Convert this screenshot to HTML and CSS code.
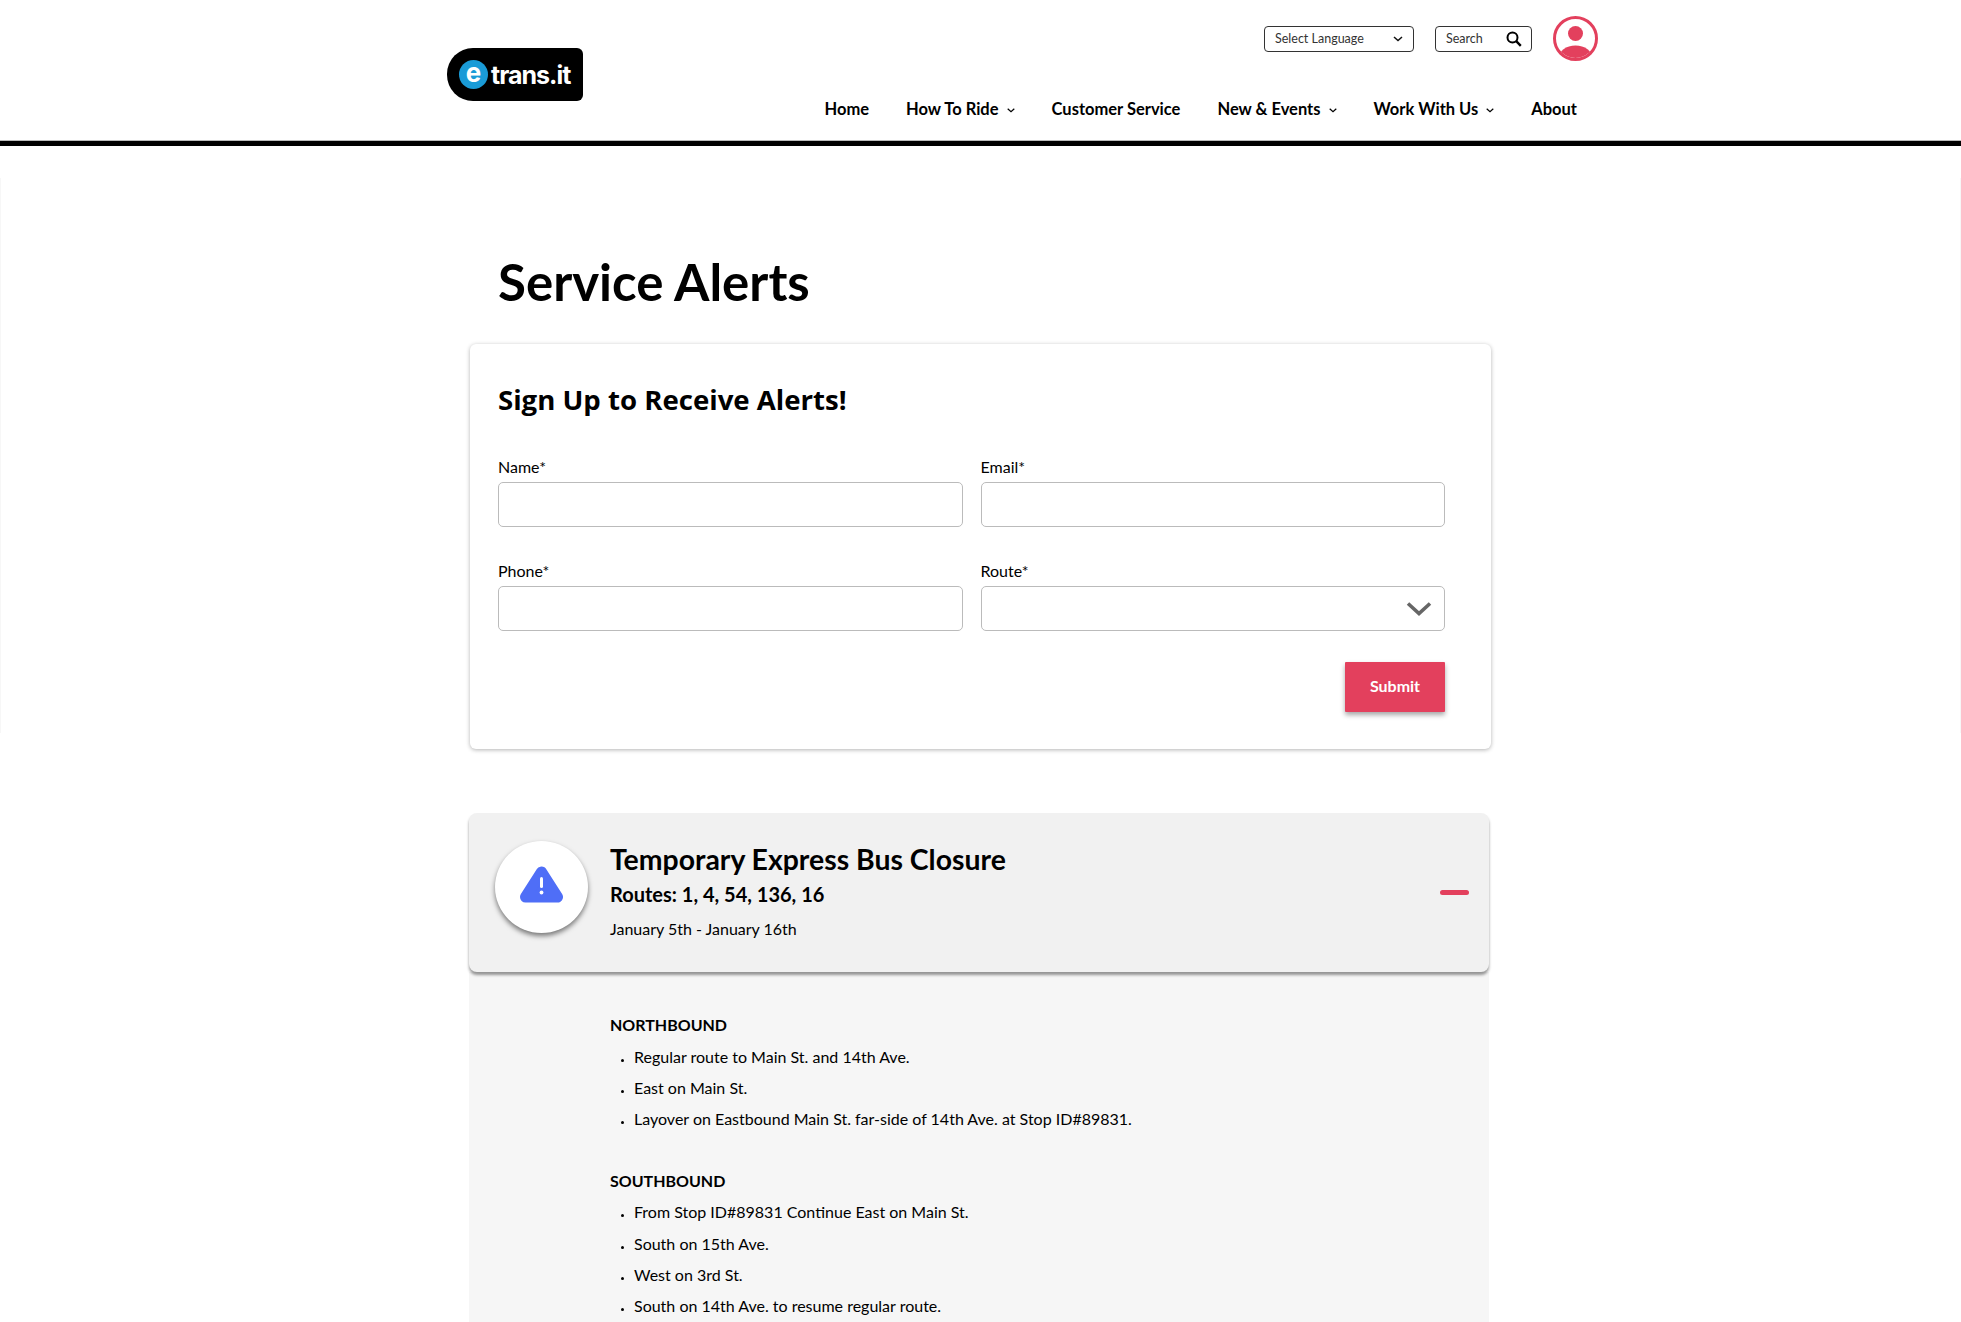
FILE: index.html
```html
<!DOCTYPE html>
<html>

<head>
    <title>Service Alerts</title>
    <link rel="stylesheet" href="styles.css">
</head>

<body>
    <!-- Faint edges of the page panel -->
    <div class="page-frame"></div>

    <!-- Header -->
    <header class="site-header">
        <div class="header-inner">
            <a class="logo" href="#"><span class="logo-e">e</span><span class="logo-text">trans.it</span></a>

            <div class="header-right">
                <div class="utility-row">
                    <div class="lang-select">
                        <span>Select Language</span>
                        <svg width="10" height="6" viewBox="0 0 10 6"><path d="M1 1l4 3.6L9 1" fill="none" stroke="#111" stroke-width="1.5"/></svg>
                    </div>
                    <div class="search-box">
                        <span>Search</span>
                        <svg width="16" height="16" viewBox="0 0 16 16"><circle cx="6.5" cy="6.5" r="5" fill="none" stroke="#000" stroke-width="2"/><path d="M10.2 10.2l4.6 4.6" stroke="#000" stroke-width="2.4"/></svg>
                    </div>
                    <svg class="avatar" width="45" height="45" viewBox="0 0 45 45">
                        <defs><clipPath id="avatar-clip"><circle cx="22.5" cy="22.5" r="19.5"/></clipPath></defs>
                        <circle cx="22.5" cy="22.5" r="21" fill="#fff" stroke="#e3405d" stroke-width="3"/>
                        <circle cx="22.5" cy="17.5" r="7.5" fill="#e3405d"/>
                        <ellipse cx="22.5" cy="42" rx="17" ry="12.5" fill="#e3405d" clip-path="url(#avatar-clip)"/>
                    </svg>
                </div>

                <nav class="main-nav">
                    <a href="#">Home</a>
                    <a href="#">How To Ride <svg width="8" height="5" viewBox="0 0 8 5"><path d="M.7.8L4 3.8 7.3.8" fill="none" stroke="#000" stroke-width="1.2"/></svg></a>
                    <a href="#">Customer Service</a>
                    <a href="#">New &amp; Events <svg width="8" height="5" viewBox="0 0 8 5"><path d="M.7.8L4 3.8 7.3.8" fill="none" stroke="#000" stroke-width="1.2"/></svg></a>
                    <a href="#">Work With Us <svg width="8" height="5" viewBox="0 0 8 5"><path d="M.7.8L4 3.8 7.3.8" fill="none" stroke="#000" stroke-width="1.2"/></svg></a>
                    <a href="#">About</a>
                </nav>
            </div>
        </div>
    </header>

    <main class="content">
        <h1 class="page-title">Service Alerts</h1>

        <!-- Sign up form -->
        <section class="signup-card">
            <h2>Sign Up to Receive Alerts!</h2>
            <form class="signup-form">
                <div class="field">
                    <label for="name">Name*</label>
                    <input type="text" id="name">
                </div>
                <div class="field">
                    <label for="email">Email*</label>
                    <input type="text" id="email">
                </div>
                <div class="field">
                    <label for="phone">Phone*</label>
                    <input type="text" id="phone">
                </div>
                <div class="field">
                    <label for="route">Route*</label>
                    <div class="select-wrap">
                        <select id="route"></select>
                        <svg class="select-arrow" width="26" height="16" viewBox="0 0 26 16"><path d="M2 2.5l11 10 11-10" fill="none" stroke="#666" stroke-width="3.6"/></svg>
                    </div>
                </div>
                <div class="form-actions">
                    <button type="button" class="submit-btn">Submit</button>
                </div>
            </form>
        </section>

        <!-- Alert -->
        <section class="alert">
            <div class="alert-head">
                <div class="alert-icon">
                    <svg width="43" height="37" viewBox="0 0 43 37">
                        <path d="M21.5 6L37.5 31H5.5Z" fill="#4f6ef7" stroke="#4f6ef7" stroke-width="11" stroke-linejoin="round"/>
                        <rect x="20" y="11" width="3" height="11" rx="1.5" fill="#fff"/>
                        <circle cx="21.5" cy="26.5" r="1.9" fill="#fff"/>
                    </svg>
                </div>
                <div class="alert-info">
                    <h3>Temporary Express Bus Closure</h3>
                    <p class="alert-routes">Routes: 1, 4, 54, 136, 16</p>
                    <p class="alert-dates">January 5th - January 16th</p>
                </div>
                <span class="collapse-bar"></span>
            </div>
            <div class="alert-body">
                <h4>NORTHBOUND</h4>
                <ul>
                    <li>Regular route to Main St. and 14th Ave.</li>
                    <li>East on Main St.</li>
                    <li>Layover on Eastbound Main St. far-side of 14th Ave. at Stop ID#89831.</li>
                </ul>
                <h4>SOUTHBOUND</h4>
                <ul>
                    <li>From Stop ID#89831 Continue East on Main St.</li>
                    <li>South on 15th Ave.</li>
                    <li>West on 3rd St.</li>
                    <li>South on 14th Ave. to resume regular route.</li>
                </ul>
            </div>
        </section>
    </main>
</body>

</html>
```

FILE: styles.css
```css
html, body {
    height: 1322px;
    overflow: hidden;
}

body {
    font-family: Lato, sans-serif;
    background-color: #fff;
    color: #000;
    margin: 0;
    padding: 0;
}

.page-frame {
    position: absolute;
    top: 178px;
    left: 0;
    right: 0;
    height: 555px;
    border-left: 1px solid #f7f7f7;
    border-right: 1px solid #f7f7f7;
}

.site-header {
    height: 141px;
    border-bottom: 5px solid #000;
    box-shadow: 0 -1px 0 #bbb inset;
}

.header-inner {
    display: flex;
    justify-content: space-between;
    width: 1151px;
    margin-left: 447px;
}

.logo {
    display: flex;
    align-items: center;
    width: 136px;
    height: 53px;
    margin-top: 48px;
    padding-left: 12px;
    box-sizing: border-box;
    background-color: #000;
    border-radius: 26px 6px 6px 26px;
    color: #fff;
    text-decoration: none;
}

.logo-e {
    width: 29px;
    height: 29px;
    border-radius: 50%;
    background-color: #1a9bd7;
    font-family: Inter, sans-serif;
    font-size: 26px;
    font-weight: 700;
    line-height: 25px;
    text-align: center;
}

.logo-text {
    margin-left: 3px;
    font-family: Inter, sans-serif;
    font-size: 25px;
    font-weight: 700;
    letter-spacing: -1px;
}

.header-right {
    display: flex;
    flex-direction: column;
    align-items: flex-end;
}

.utility-row {
    display: flex;
    align-items: center;
    gap: 21px;
    margin-top: 16px;
}

.lang-select, .search-box {
    display: flex;
    align-items: center;
    justify-content: space-between;
    height: 26px;
    box-sizing: border-box;
    padding: 0 10px;
    border: 1.5px solid #333;
    border-radius: 4px;
    font-size: 12.5px;
    color: #333;
}

.lang-select {
    width: 150px;
}

.search-box {
    width: 97px;
    padding-right: 9px;
}

.main-nav {
    display: flex;
    align-items: center;
    gap: 37px;
    margin-top: 38px;
    padding-right: 21px;
}

.main-nav a {
    color: #000;
    font-size: 16.5px;
    font-weight: 700;
    text-decoration: none;
}

.main-nav svg {
    margin-left: 4px;
    vertical-align: 2px;
}

.content {
    position: relative;
    width: 1021px;
    margin: 0 auto;
}

.page-title {
    margin: 0;
    padding: 106px 0 0 28px;
    font-size: 51px;
    font-weight: 700;
    line-height: 60px;
}

.signup-card {
    height: 405px;
    box-sizing: border-box;
    margin-top: 32px;
    padding: 36px 46px 0 28px;
    background-color: #fff;
    border-radius: 6px;
    box-shadow: 0 1px 4px rgba(0, 0, 0, 0.3);
}

.signup-card h2 {
    margin: 0;
    font-family: "Open Sans", sans-serif;
    font-size: 27.6px;
    font-weight: 700;
    line-height: 38px;
}

.signup-form {
    display: grid;
    grid-template-columns: 465px 464.5px;
    column-gap: 17.5px;
    row-gap: 33.5px;
    margin-top: 39px;
}

.field label {
    display: block;
    font-size: 16px;
    line-height: 20px;
    margin-bottom: 5px;
}

.field input, .field select {
    display: block;
    width: 100%;
    height: 45px;
    box-sizing: border-box;
    background-color: #fff;
    border: 1.5px solid #bbb;
    border-radius: 5px;
    appearance: none;
}

.select-wrap {
    position: relative;
}

.select-arrow {
    position: absolute;
    top: 15px;
    right: 13px;
}

.form-actions {
    grid-column: 1 / 3;
    display: flex;
    justify-content: flex-end;
    margin-top: -2.5px;
}

.submit-btn {
    width: 100px;
    height: 50px;
    padding-bottom: 4px;
    background-color: #e3405d;
    border: none;
    border-radius: 1px;
    box-shadow: 0 3px 5px rgba(0, 0, 0, 0.35);
    color: #fff;
    font-family: Lato, sans-serif;
    font-size: 16px;
    font-weight: 700;
}

.alert {
    width: 1020px;
    margin: 64px 0 0 -1px;
}

.alert-head {
    position: relative;
    z-index: 1;
    display: flex;
    align-items: flex-start;
    height: 159px;
    box-sizing: border-box;
    padding: 28px 0 0 26px;
    background-color: #f1f1f1;
    border-radius: 8px;
    box-shadow: 0 3px 3px rgba(0, 0, 0, 0.4);
}

.alert-icon {
    display: flex;
    align-items: center;
    justify-content: center;
    width: 93px;
    height: 92px;
    background-color: #fff;
    border-radius: 50%;
    box-shadow: 0 3px 5px rgba(0, 0, 0, 0.5);
}

.alert-icon svg {
    margin-bottom: 6px;
}

.alert-info {
    margin-left: 22px;
    flex-grow: 1;
}

.alert-info h3 {
    margin: 0;
    font-size: 28.4px;
    font-weight: 700;
    line-height: 36px;
}

.alert-routes {
    margin: 1px 0 0;
    font-size: 20px;
    font-weight: 700;
    line-height: 32px;
}

.alert-dates {
    margin: 3px 0 0;
    font-size: 16px;
    line-height: 32px;
}

.collapse-bar {
    width: 29px;
    height: 5px;
    margin: 49px 20px 0 0;
    background-color: #e3405d;
    border-radius: 3px;
}

.alert-body {
    padding: 41px 0 40px 141px;
    background-color: #f6f6f6;
}

.alert-body h4 {
    margin: 0;
    font-size: 16px;
    font-weight: 700;
    line-height: 24px;
}

.alert-body ul {
    margin: 0 0 34.5px;
    padding: 3.5px 0 0 24px;
}

.alert-body li {
    font-size: 16px;
    line-height: 31.25px;
}

.alert-body li::marker {
    font-size: 10px;
}
```
